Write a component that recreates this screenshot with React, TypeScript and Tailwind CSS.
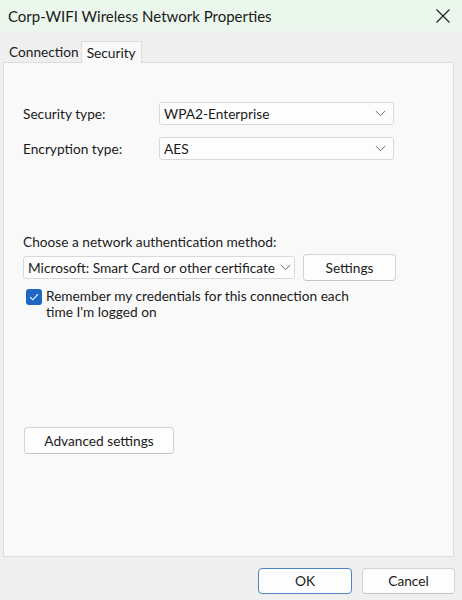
import React from 'react';

const Chevron = () => (
    <svg width="11" height="7" viewBox="0 0 11 7" className="shrink-0">
        <path d="M0.8 1 L5.5 5.6 L10.2 1" fill="none" stroke="#6b6b6b" strokeWidth="1" />
    </svg>
);

const Select: React.FC<{ value: string; className?: string }> = ({ value, className }) => (
    <div className={`flex items-center justify-between h-[23px] pl-[4px] pr-[7px] bg-[#fdfdfd] border border-[#d9d9d9] rounded-[3px] text-[#1b1b1b] ${className ?? ''}`}>
        <span className="whitespace-nowrap">{value}</span>
        <Chevron />
    </div>
);

const Button: React.FC<{ label: string; className?: string }> = ({ label, className }) => (
    <button className={`flex items-center justify-center bg-[#fdfdfd] border border-[#d3d3d3] border-b-[#c4c4c4] rounded-[4px] text-[#1b1b1b] ${className ?? ''}`}>
        {label}
    </button>
);

export default function App() {
    return (
        <div className="w-[462px] h-[600px] bg-[#efefef] flex flex-col text-[13.7px] leading-[16px] text-[#1b1b1b]" style={{ fontFamily: '"Segoe UI", Lato, "Noto Sans", sans-serif' }}>
            {/* title bar */}
            <div className="h-[31px] bg-[#ebf6ec] flex items-center justify-between pl-[8px] pr-[11px]">
                <span className="text-[15px] text-[#1a1a1a]">Corp-WIFI Wireless Network Properties</span>
                <svg width="16" height="16" viewBox="0 0 16 16">
                    <path d="M1.5 1.5 L14.5 14.5 M14.5 1.5 L1.5 14.5" stroke="#222" strokeWidth="1.2" fill="none" />
                </svg>
            </div>

            {/* tabs */}
            <div className="flex items-end pl-[4px] mt-[9px] h-[22px]">
                <div className="h-[20px] pl-[5px] pr-[2px] flex items-center text-[#1b1b1b] bg-[#efefef]">Connection</div>
                <div className="h-[22px] pl-[5px] pr-[5px] flex items-center bg-[#f9f9f9] border-t border-x border-[#dedede] mb-[-1px] relative z-10">Security</div>
            </div>

            {/* panel */}
            <div className="ml-[3px] w-[451px] h-[495px] bg-[#f9f9f9] border border-[#dcdcdc] flex flex-col pl-[19px]">
                <div className="flex items-center mt-[39px]">
                    <span className="w-[136px]">Security type:</span>
                    <Select value="WPA2-Enterprise" className="w-[235px]" />
                </div>
                <div className="flex items-center mt-[12px]">
                    <span className="w-[136px]">Encryption type:</span>
                    <Select value="AES" className="w-[235px]" />
                </div>

                <div className="mt-[74px]">Choose a network authentication method:</div>
                <div className="flex items-center gap-[8px] mt-[4px]">
                    <Select value="Microsoft: Smart Card or other certificate" className="w-[272px] !pr-[4px] gap-[5px]" />
                    <Button label="Settings" className="w-[93px] h-[27px]" />
                </div>
                <div className="flex items-start mt-[7px] pl-[3px]">
                    <div className="w-[16px] h-[16px] rounded-[3px] bg-[#1d66c1] flex items-center justify-center shrink-0 mt-[1px]">
                        <svg width="10" height="8" viewBox="0 0 10 8">
                            <path d="M1 4.2 L3.8 6.8 L9 1.2" fill="none" stroke="#fff" strokeWidth="1.1" />
                        </svg>
                    </div>
                    <span className="ml-[4px] w-[320px]">Remember my credentials for this connection each time I'm logged on</span>
                </div>

                <Button label="Advanced settings" className="w-[150px] h-[27px] mt-[107px] ml-[1px]" />
            </div>

            {/* footer */}
            <div className="flex justify-end gap-[10px] mt-[11px] pr-[7px]">
                <Button label="OK" className="w-[94px] h-[26px] !border-[#4f86c6]" />
                <Button label="Cancel" className="w-[93px] h-[26px]" />
            </div>
        </div>
    );
}
